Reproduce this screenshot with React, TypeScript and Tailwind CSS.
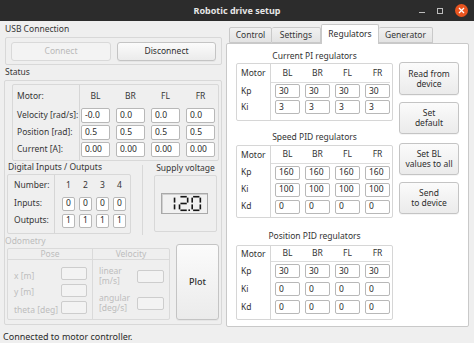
import React from "react";

type BoxProps = { v?: string; cls: string };
const Box = ({ v = "", cls }: BoxProps) => (
  <div className={"bg-white border border-[#b8b8b8] rounded-[2px] flex items-center pl-[3px] text-[#2a2a2a] leading-none " + cls}>{v}</div>
);

const DBox = ({ cls }: { cls: string }) => (
  <div className={"bg-[#f3f3f3] border border-[#cdcdcd] rounded-[2px] " + cls} />
);

const Btn = ({ children, cls, disabled }: { children: React.ReactNode; cls: string; disabled?: boolean }) => (
  <div
    className={
      "flex items-center justify-center text-center rounded-[3px] border leading-[10px] " +
      (disabled
        ? "bg-[#f3f3f3] border-[#d9d9d9] text-[#b9b9b9] "
        : "bg-gradient-to-b from-[#fbfbfb] to-[#ebebeb] border-[#c4c4c4] text-[#2e2e2e] shadow-[0_1px_0_rgba(0,0,0,0.04)] ") +
      cls
    }
  >
    {children}
  </div>
);

function Seg({ x, y, w, h, segs }: { x: number; y: number; w: number; h: number; segs: string }) {
  const m = y + h / 2;
  const g = 1;
  const lines: Record<string, [number, number, number, number]> = {
    a: [x + g, y, x + w - g, y],
    b: [x + w, y + g, x + w, m - g],
    c: [x + w, m + g, x + w, y + h - g],
    d: [x + g, y + h, x + w - g, y + h],
    e: [x, m + g, x, y + h - g],
    f: [x, y + g, x, m - g],
    g: [x + g, m, x + w - g, m],
  };
  return (
    <g>
      {segs.split("").map((s) => {
        const l = lines[s];
        return <line key={s} x1={l[0]} y1={l[1]} x2={l[2]} y2={l[3]} stroke="#151515" strokeWidth={1.8} />;
      })}
    </g>
  );
}

const LCD = () => (
  <svg width="47" height="21" viewBox="0 0 47 21" className="bg-[#f1f1f1] border border-[#a9a9a9] shadow-[inset_1px_1px_0_#d0d0d0]">
    <Seg x={12.5} y={3} w={0} h={15} segs="bc" />
    <Seg x={18} y={3} w={9} h={15} segs="abged" />
    <rect x={27.8} y={17} width={1.8} height={1.8} fill="#151515" />
    <Seg x={32} y={3} w={9} h={15} segs="abcdef" />
  </svg>
);

const cols = ["BL", "BR", "FL", "FR"];

function RegTable({
  rows,
  headerH,
  rowH,
  frameH,
}: {
  rows: [string, string][];
  headerH: string;
  rowH: string;
  frameH: string;
}) {
  return (
    <div className={"w-[157px] border border-[#d6d6d6] rounded-[2px] flex " + frameH}>
      <div className="w-[34px] border-r border-[#d6d6d6] flex flex-col">
        <div className={"flex items-center pl-[4px] " + headerH}>Motor</div>
        {rows.map(([l]) => (
          <div key={l} className={"flex items-center pl-[4px] " + rowH}>
            {l}
          </div>
        ))}
      </div>
      <div className="flex flex-col flex-1">
        <div className={"flex pl-[4px] gap-[5px] border-b border-[#dcdcdc] w-[119px] " + headerH}>
          {cols.map((c) => (
            <div key={c} className="w-[25px] flex items-center justify-center">
              {c}
            </div>
          ))}
        </div>
        {rows.map(([l, v]) => (
          <div key={l} className={"flex items-center pl-[4px] gap-[5px] " + rowH}>
            {cols.map((c) => (
              <Box key={c} v={v} cls="w-[25px] h-[14px]" />
            ))}
          </div>
        ))}
      </div>
    </div>
  );
}

export default function App() {
  return (
    <div className="w-[474px] h-[343px] bg-[#efefef] flex flex-col overflow-hidden font-['Noto_Sans',sans-serif] text-[8.5px] text-[#363636]">
      {/* Title bar */}
      <div className="h-[21px] shrink-0 bg-[#2c2c2c] grid grid-cols-[1fr_auto_1fr] items-center">
        <div />
        <div className="text-[#e6e6e6] font-bold text-[9px]">Robotic drive setup</div>
        <div className="flex items-center justify-end pr-[6px] gap-[12px]">
          <div className="w-[6px] h-[1px] bg-[#bdbdbd] mt-[3px]" />
          <div className="w-[6px] h-[6px] border border-[#bdbdbd]" />
          <div className="w-[13px] h-[13px] rounded-full bg-[#e9541f] flex items-center justify-center">
            <svg width="7" height="7" viewBox="0 0 7 7">
              <path d="M1 1L6 6M6 1L1 6" stroke="#fff" strokeWidth="1.3" />
            </svg>
          </div>
        </div>
      </div>

      {/* Main */}
      <div className="h-[309px] flex">
        {/* Left column */}
        <div className="w-[226px] flex flex-col">
          <div className="h-[16px] pl-[5px] flex items-center pt-[1px]">USB Connection</div>
          <div className="ml-[5px] w-[217px] h-[28px] border border-[#d8d8d8] rounded-[2px] flex items-center pl-[5px] gap-[6px]">
            <Btn cls="w-[100px] h-[19px]" disabled>
              Connect
            </Btn>
            <Btn cls="w-[99px] h-[19px]">Disconnect</Btn>
          </div>
          <div className="h-[15px] pl-[5px] flex items-center">Status</div>
          <div className="ml-[4px] w-[218px] h-[245px] border border-[#d8d8d8] rounded-[2px] flex flex-col">
            {/* Motor table */}
            <div className="mt-[3px] ml-[7px] w-[207px] h-[77px] border border-[#d8d8d8] rounded-[2px] flex">
              <div className="w-[67px] border-r border-[#d6d6d6] flex flex-col">
                <div className="h-[22px] flex items-center pl-[4px]">Motor:</div>
                {["Velocity [rad/s]:", "Position [rad]:", "Current [A]:"].map((l) => (
                  <div key={l} className="h-[17px] flex items-center pl-[4px]">
                    {l}
                  </div>
                ))}
              </div>
              <div className="flex flex-col">
                <div className="h-[22px] flex items-center pl-[1px] gap-[6px]">
                  {cols.map((c) => (
                    <div key={c} className="w-[29px] text-center">
                      {c}
                    </div>
                  ))}
                </div>
                {["-0.0|0.0|0.0|0.0", "0.5|0.5|0.5|0.5", "0.00|0.00|0.00|0.00"].map((r) => (
                  <div key={r} className="h-[17px] flex items-center pl-[1px] gap-[6px]">
                    {r.split("|").map((v, i) => (
                      <Box key={i} v={v} cls="w-[29px] h-[15px]" />
                    ))}
                  </div>
                ))}
              </div>
            </div>

            {/* Digital IO + supply */}
            <div className="h-[74px] flex">
              <div className="w-[138px] border-r border-[#d8d8d8] mt-[4px] flex flex-col">
                <div className="h-[9px] -mt-[2px] pl-[3px] flex items-center">Digital Inputs / Outputs</div>
                <div className="mt-[2px] ml-[2px] w-[124px] h-[60px] border border-[#d8d8d8] rounded-[2px] flex">
                  <div className="w-[47px] border-r border-[#d6d6d6] flex flex-col">
                    <div className="h-[20px] flex items-center pl-[6px]">Number:</div>
                    <div className="h-[17px] flex items-center pl-[6px]">Inputs:</div>
                    <div className="h-[17px] flex items-center pl-[6px]">Outputs:</div>
                  </div>
                  <div className="flex flex-col pl-[7px]">
                    <div className="h-[20px] flex items-center gap-[4px]">
                      {["1", "2", "3", "4"].map((n) => (
                        <div key={n} className="w-[13px] text-center">
                          {n}
                        </div>
                      ))}
                    </div>
                    {["0", "1"].map((v) => (
                      <div key={v} className="h-[17px] flex items-center gap-[4px]">
                        {[0, 1, 2, 3].map((i) => (
                          <div key={i} className="w-[13px] h-[14px] bg-white border border-[#b8b8b8] rounded-[2px] flex items-center justify-center text-[#2a2a2a]">
                            {v}
                          </div>
                        ))}
                      </div>
                    ))}
                  </div>
                </div>
              </div>
              <div className="ml-[11px] w-[63px] flex flex-col">
                <div className="h-[14px] flex items-center justify-center whitespace-nowrap pt-[1px]">Supply voltage</div>
                <div className="h-[57px] border border-[#d8d8d8] rounded-[2px] flex items-center justify-center pr-[2px]">
                  <LCD />
                </div>
              </div>
            </div>

            {/* Odometry + plot */}
            <div className="flex">
              <div className="w-[166px] flex flex-col">
                <div className="h-[12px] flex items-center text-[#bcbcbc]">Odometry</div>
                <div className="mt-[1px] ml-[2px] w-[163px] h-[72px] border border-[#dadada] rounded-[2px] flex text-[#bdbdbd]">
                  <div className="w-[85px] border-r border-[#dadada] flex flex-col">
                    <div className="h-[11px] border-b border-[#dadada] flex items-center justify-center">Pose</div>
                    <div className="flex pl-[6px] pt-[6px]">
                      <div className="w-[47px] flex flex-col">
                        <div className="h-[18px] flex items-center pt-[3px]">x [m]</div>
                        <div className="h-[17px] flex items-center">y [m]</div>
                        <div className="h-[18px] flex items-center">theta [deg]</div>
                      </div>
                      <div className="flex flex-col gap-[4px] pt-[1px]">
                        <DBox cls="w-[26px] h-[13px]" />
                        <DBox cls="w-[26px] h-[13px]" />
                        <DBox cls="w-[26px] h-[13px]" />
                      </div>
                    </div>
                  </div>
                  <div className="flex-1 flex flex-col">
                    <div className="h-[11px] border-b border-[#dadada] flex items-center justify-center">Velocity</div>
                    <div className="flex pl-[6px] pt-[6px]">
                      <div className="w-[38px] flex flex-col leading-[10px] gap-[7px]">
                        <div>
                          linear
                          <br />
                          [m/s]
                        </div>
                        <div>
                          angular
                          <br />
                          [deg/s]
                        </div>
                      </div>
                      <div className="flex flex-col gap-[14px] pt-[4px]">
                        <DBox cls="w-[27px] h-[13px]" />
                        <DBox cls="w-[27px] h-[13px]" />
                      </div>
                    </div>
                  </div>
                </div>
              </div>
              <Btn cls="ml-[5px] mt-[9px] w-[43px] h-[76px] font-medium text-[9px]">Plot</Btn>
            </div>
          </div>
        </div>

        {/* Right column: tabs */}
        <div className="w-[243px] flex flex-col">
          <div className="h-[22px] flex items-end pl-[3px] relative z-10">
            <div className="w-[43px] h-[16px] border border-[#c9c9c9] bg-gradient-to-b from-[#f1f1f1] to-[#e3e3e3] rounded-t-[2px] flex items-center justify-center">
              Control
            </div>
            <div className="w-[49px] h-[16px] border border-l-0 border-[#c9c9c9] bg-gradient-to-b from-[#f1f1f1] to-[#e3e3e3] rounded-t-[2px] flex items-center justify-center">
              Settings
            </div>
            <div className="w-[58px] h-[20px] -mb-[1px] border border-b-0 border-[#c9c9c9] bg-white rounded-t-[2px] flex items-center justify-center text-[#2e2e2e]">
              Regulators
            </div>
            <div className="w-[54px] h-[16px] border border-l-0 border-[#c9c9c9] bg-gradient-to-b from-[#f1f1f1] to-[#e3e3e3] rounded-t-[2px] flex items-center justify-center">
              Generator
            </div>
          </div>
          <div className="h-[284px] bg-white border border-[#c9c9c9] rounded-[2px] flex pl-[9px] pt-[6px] gap-[6px] text-[#333]">
            <div className="w-[157px] flex flex-col">
              <div className="h-[13px] flex items-center justify-center">Current PI regulators</div>
              <RegTable rows={[["Kp", "30"], ["Ki", "3"]]} headerH="h-[19px]" rowH="h-[16px]" frameH="h-[58px]" />
              <div className="h-[24px] flex items-end justify-center pb-[1px]">Speed PID regulators</div>
              <RegTable rows={[["Kp", "160"], ["Ki", "100"], ["Kd", "0"]]} headerH="h-[18px]" rowH="h-[17px]" frameH="h-[73px]" />
              <div className="h-[27px] flex items-end justify-center pb-[2px]">Position PID regulators</div>
              <RegTable rows={[["Kp", "30"], ["Ki", "0"], ["Kd", "0"]]} headerH="h-[16px]" rowH="h-[18px]" frameH="h-[75px]" />
            </div>
            <div className="flex flex-col pt-[12px] gap-[7px]">
              <Btn cls="w-[60px] h-[33px]">
                Read from
                <br />
                device
              </Btn>
              <Btn cls="w-[60px] h-[32px]">
                Set
                <br />
                default
              </Btn>
              <Btn cls="w-[60px] h-[32px] mt-[2px]">
                Set BL
                <br />
                values to all
              </Btn>
              <Btn cls="w-[60px] h-[32px]">
                Send
                <br />
                to device
              </Btn>
            </div>
          </div>
        </div>
      </div>

      {/* Status bar */}
      <div className="h-[13px] flex items-center pl-[3px] text-[#2a2a2a] text-[9px]">Connected to motor controller.</div>
    </div>
  );
}
